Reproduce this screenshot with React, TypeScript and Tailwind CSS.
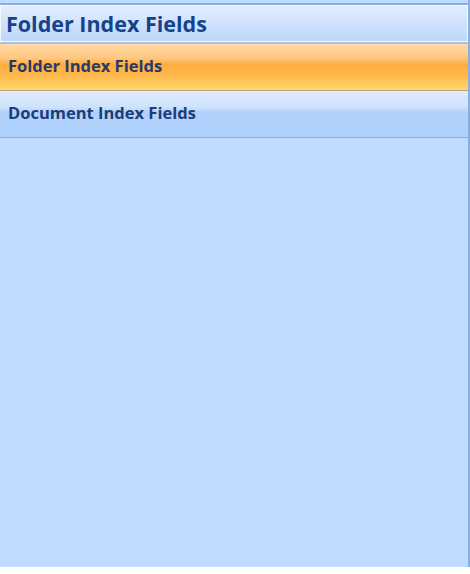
import React from 'react';

const items = [
  { label: 'Folder Index Fields', active: true },
  { label: 'Document Index Fields', active: false },
];

const NavItem: React.FC<{ label: string; active: boolean }> = ({ label, active }) => (
  <div
    className={`flex items-center h-[47px] px-2 border-b ${
      active
        ? 'bg-[linear-gradient(to_bottom,#ffd9a8_0%,#ffc77f_30%,#ffab3f_45%,#ffbe50_75%,#ffd870_100%)] border-[#c2a27a] text-[#283a66]'
        : 'bg-[linear-gradient(to_bottom,#deebfe_0%,#cfe2fd_35%,#b3d2fb_45%,#aed0fb_100%)] border-[#8aaede] text-[#1c3c7a]'
    }`}
  >
    <span className="text-[16.5px] font-bold leading-none pb-[1px]">{label}</span>
  </div>
);

const App: React.FC = () => {
  return (
    <div className="w-[470px] h-[574px] bg-white font-['Open_Sans',sans-serif]">
      <div className="h-[567px] pt-[3px] flex flex-col bg-[#bfdbff] border-r-2 border-[#8aaede]">
        <div className="border-t-2 border-[#8aaede] bg-[#e3eefc]">
          <div className="h-[37px] flex items-center px-[5px] border border-white/80 bg-[linear-gradient(to_bottom,#e3eefd,#bcd7fb)]">
            <span className="text-[21.5px] font-bold text-[#15428b] leading-none">Folder Index Fields</span>
          </div>
          <div className="h-[2px] bg-[#a8c1e3]" />
        </div>
        {items.map((it) => (
          <NavItem key={it.label} label={it.label} active={it.active} />
        ))}
        <div className="flex-1" />
      </div>
    </div>
  );
};

export default App;
